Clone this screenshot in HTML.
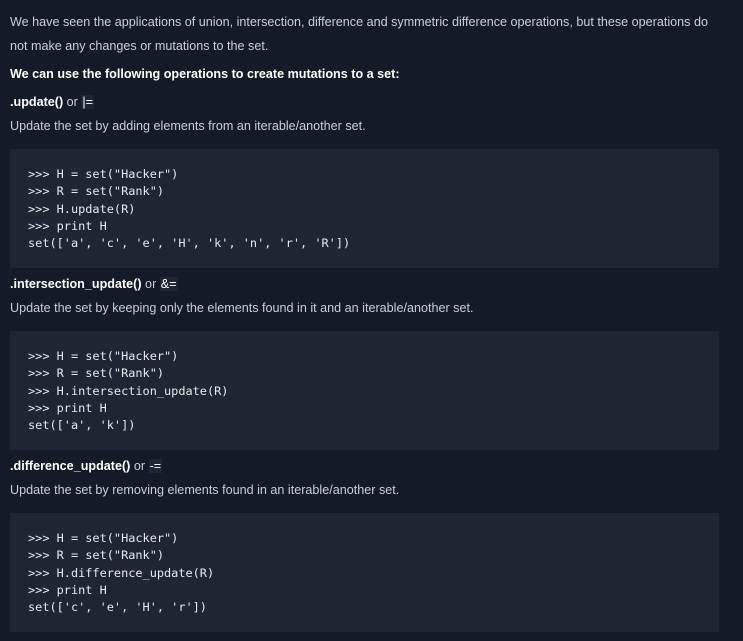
<!DOCTYPE html>
<html><head><style>
html,body{margin:0;padding:0;background:#141a28;width:743px;height:641px;overflow:hidden}
body{font-family:"Liberation Sans",sans-serif;font-size:12.6px;color:#c9ced6;position:relative}
.t{position:absolute;left:10px;white-space:nowrap;line-height:16px}
b{color:#fff}
.c{background:#1f2533;color:#fff;padding:0 1px;font-family:"Liberation Sans",sans-serif}
.code{position:absolute;left:10px;width:709px;height:119px;background:#1f2533}
.code pre{margin:0;position:absolute;left:18px;top:17px;font-family:"DejaVu Sans Mono","Liberation Mono",monospace;font-size:11.9px;line-height:17.3px;color:#e6e9ee}
</style></head><body>
<div class="t" style="top:14px">We have seen the applications of union, intersection, difference and symmetric difference operations, but these operations do</div>
<div class="t" style="top:38px">not make any changes or mutations to the set.</div>
<div class="t" style="top:66px"><b>We can use the following operations to create mutations to a set:</b></div>
<div class="t" style="top:94px"><b>.update()</b> or <span class="c">|=</span></div>
<div class="t" style="top:118px">Update the set by adding elements from an iterable/another set.</div>
<div class="code" style="top:149px"><pre>&gt;&gt;&gt; H = set("Hacker")
&gt;&gt;&gt; R = set("Rank")
&gt;&gt;&gt; H.update(R)
&gt;&gt;&gt; print H
set(['a', 'c', 'e', 'H', 'k', 'n', 'r', 'R'])</pre></div>
<div class="t" style="top:276px"><b>.intersection_update()</b> or <span class="c">&amp;=</span></div>
<div class="t" style="top:300px">Update the set by keeping only the elements found in it and an iterable/another set.</div>
<div class="code" style="top:331px"><pre>&gt;&gt;&gt; H = set("Hacker")
&gt;&gt;&gt; R = set("Rank")
&gt;&gt;&gt; H.intersection_update(R)
&gt;&gt;&gt; print H
set(['a', 'k'])</pre></div>
<div class="t" style="top:458px"><b>.difference_update()</b> or <span class="c">-=</span></div>
<div class="t" style="top:482px">Update the set by removing elements found in an iterable/another set.</div>
<div class="code" style="top:513px"><pre>&gt;&gt;&gt; H = set("Hacker")
&gt;&gt;&gt; R = set("Rank")
&gt;&gt;&gt; H.difference_update(R)
&gt;&gt;&gt; print H
set(['c', 'e', 'H', 'r'])</pre></div>
</body></html>
